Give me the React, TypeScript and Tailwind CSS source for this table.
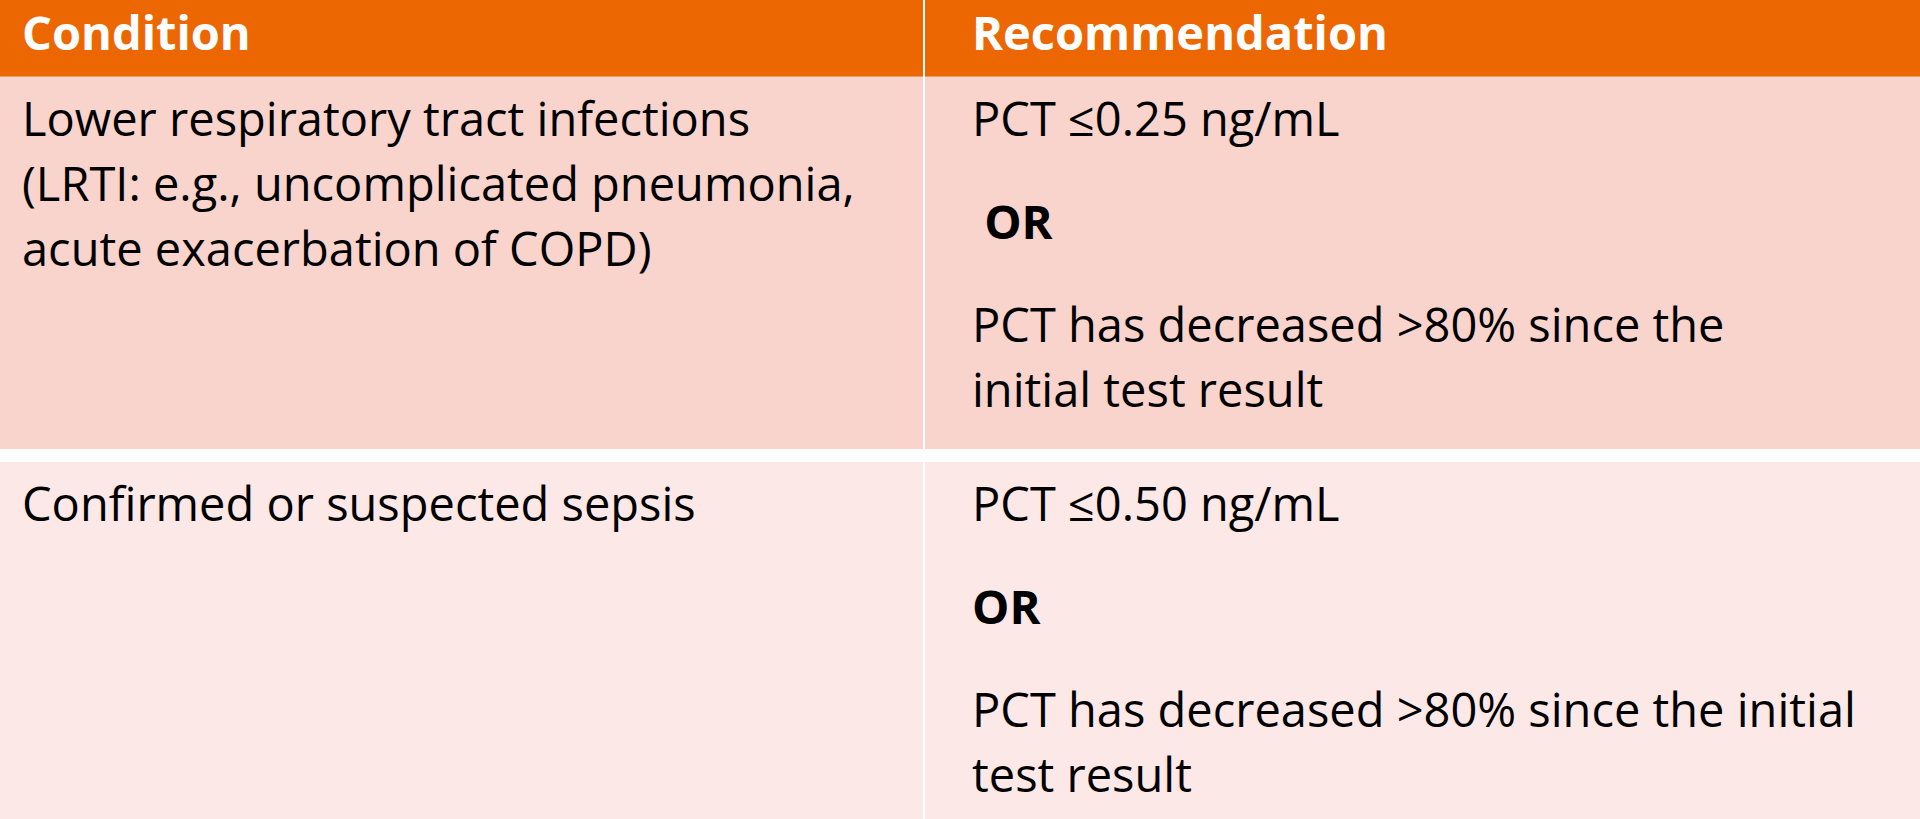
import React from "react";

const font = { fontFamily: '"Open Sans", "Noto Sans", sans-serif' };

function Lines({ lines }: { lines: string[] }) {
  return (
    <div>
      {lines.map((l, i) => (
        <div key={i} className="whitespace-pre leading-[65px]">
          {l}
        </div>
      ))}
    </div>
  );
}

export default function App() {
  return (
    <div
      className="w-[1920px] h-[819px] overflow-hidden bg-white text-black text-[47px]"
      style={font}
    >
      {/* Header */}
      <div className="flex gap-[2px] h-[77px]">
        <div className="w-[923px] h-[77px] bg-[#EC6602] border-b border-[#F39A5E] pl-[22px] pt-[1px]">
          <div className="font-bold text-white leading-[62px]">Condition</div>
        </div>
        <div className="flex-1 h-[77px] bg-[#EC6602] border-b border-[#F39A5E] pl-[47px] pt-[1px]">
          <div className="font-bold text-white leading-[62px]">Recommendation</div>
        </div>
      </div>

      {/* Row 1 */}
      <div className="flex gap-[2px] h-[372px]">
        <div className="w-[923px] bg-[#F8D4CC] pl-[22px] pt-[9px]">
          <Lines
            lines={[
              "Lower respiratory tract infections",
              "(LRTI: e.g., uncomplicated pneumonia,",
              "acute exacerbation of COPD)",
            ]}
          />
        </div>
        <div className="flex-1 bg-[#F8D4CC] pl-[47px] pt-[9px] flex flex-col gap-[38px]">
          <Lines lines={["PCT ≤0.25 ng/mL"]} />
          <div className="whitespace-pre leading-[65px] font-bold">{"\u00A0OR"}</div>
          <Lines lines={["PCT has decreased >80% since the", "initial test result"]} />
        </div>
      </div>

      {/* gap */}
      <div className="h-[13px]" />

      {/* Row 2 */}
      <div className="flex gap-[2px] h-[357px]">
        <div className="w-[923px] bg-[#FCE9E7] pl-[22px] pt-[9px]">
          <Lines lines={["Confirmed or suspected sepsis"]} />
        </div>
        <div className="flex-1 bg-[#FCE9E7] pl-[47px] pt-[9px] flex flex-col gap-[38px]">
          <Lines lines={["PCT ≤0.50 ng/mL"]} />
          <div className="whitespace-pre leading-[65px] font-bold">OR</div>
          <Lines lines={["PCT has decreased >80% since the initial", "test result"]} />
        </div>
      </div>
    </div>
  );
}
